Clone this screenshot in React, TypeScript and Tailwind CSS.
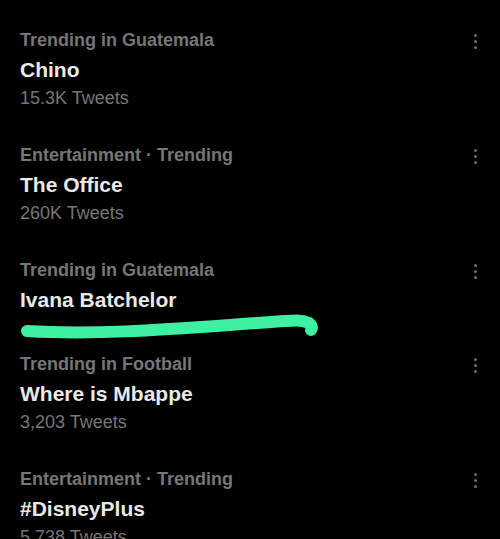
const trends = [
  { cat: 'Trending in Guatemala', title: 'Chino', count: '15.3K Tweets' },
  { cat: 'Entertainment · Trending', title: 'The Office', count: '260K Tweets' },
  { cat: 'Trending in Guatemala', title: 'Ivana Batchelor', marked: true },
  { cat: 'Trending in Football', title: 'Where is Mbappe', count: '3,203 Tweets' },
  { cat: 'Entertainment · Trending', title: '#DisneyPlus', count: '5,738 Tweets' },
]

function Dots() {
  return (
    <div className="flex flex-col items-center gap-[3px] pt-[8px]">
      <span className="block h-[3px] w-[3px] rounded-full bg-[#6e6e6e]" />
      <span className="block h-[3px] w-[3px] rounded-full bg-[#6e6e6e]" />
      <span className="block h-[3px] w-[3px] rounded-full bg-[#6e6e6e]" />
    </div>
  )
}

function Scribble() {
  return (
    <svg className="pointer-events-none absolute left-0 top-[68px]" width="340" height="40" viewBox="0 310 340 40">
      <path
        d="M27 331 C 90 335, 160 330, 230 325 S 300 319, 309 323 C 313 326, 312 329, 311 330"
        fill="none"
        stroke="#3ef0a2"
        strokeWidth="12"
        strokeLinecap="round"
        strokeLinejoin="round"
      />
    </svg>
  )
}

export default function App() {
  return (
    <div className="h-[539px] w-[500px] overflow-hidden bg-black pt-[12px] font-['Liberation_Sans',Arial,sans-serif]">
      {trends.map((t, i) => (
        <div key={i} className={`relative flex items-start justify-between pl-5 pr-[23px] pt-[14px] ${t.marked ? 'pb-[22px]' : 'pb-[14px]'}`}>
          <div className="flex flex-col">
            <span className="text-[18px] font-bold leading-[29px] text-[#767676]">{t.cat}</span>
            <span className="text-[21px] font-bold leading-[29px] text-[#e9e9e9]">{t.title}</span>
            {t.count && <span className="text-[18px] leading-[29px] text-[#767676]">{t.count}</span>}
          </div>
          <Dots />
          {t.marked && <Scribble />}
        </div>
      ))}
    </div>
  )
}
